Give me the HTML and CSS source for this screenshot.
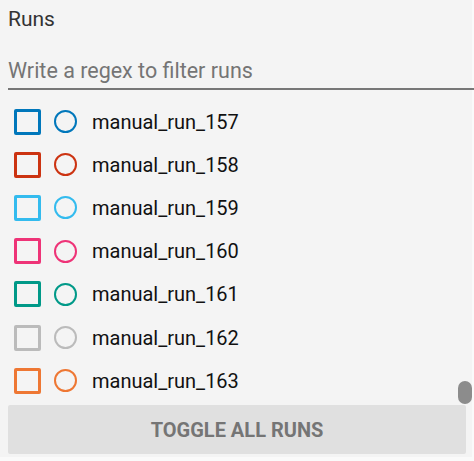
FILE: index.html
```html
<!DOCTYPE html>
<html>
<head>
<meta charset="utf-8">
<link rel="stylesheet" href="styles.css">
</head>
<body>
<div class="panel">
  <div class="title">Runs</div>
  <div class="filter"><span class="placeholder">Write a regex to filter runs</span></div>
  <div class="list">
    <div class="row c157"><span class="box"></span><span class="dot"></span><span class="name">manual_run_157</span></div>
    <div class="row c158"><span class="box"></span><span class="dot"></span><span class="name">manual_run_158</span></div>
    <div class="row c159"><span class="box"></span><span class="dot"></span><span class="name">manual_run_159</span></div>
    <div class="row c160"><span class="box"></span><span class="dot"></span><span class="name">manual_run_160</span></div>
    <div class="row c161"><span class="box"></span><span class="dot"></span><span class="name">manual_run_161</span></div>
    <div class="row c162"><span class="box"></span><span class="dot"></span><span class="name">manual_run_162</span></div>
    <div class="row c163"><span class="box"></span><span class="dot"></span><span class="name">manual_run_163</span></div>
    <div class="thumb"></div>
  </div>
  <div class="toggle">TOGGLE ALL RUNS</div>
</div>
</body>
</html>
```
FILE: styles.css
```css
html, body {
  margin: 0;
  padding: 0;
  background: #fafafa;
}
body {
  width: 474px;
  height: 461px;
  overflow: hidden;
  font-family: Roboto, "Noto Sans", sans-serif;
}
.panel {
  width: 472px;
  height: 457px;
  background: #f4f4f4;
  display: flex;
  flex-direction: column;
}
.title {
  padding: 4px 0 0 8px;
  height: 30px;
  font-size: 21px;
  line-height: 30px;
  color: #333;
}
.filter {
  margin: 24px 0 0 8px;
  width: 466px;
  height: 30px;
  border-bottom: 2px solid #777;
  display: flex;
  align-items: center;
}
.placeholder {
  font-size: 21.5px;
  color: #757575;
  line-height: 26px;
  margin-top: -4px;
}
.list {
  position: relative;
  box-sizing: border-box;
  padding: 10px 0 0 14px;
  display: flex;
  flex-direction: column;
  height: 315px;
}
.row {
  display: flex;
  align-items: center;
  height: 43.2px;
  flex: none;
}
.box {
  box-sizing: border-box;
  width: 27px;
  height: 26px;
  border: 3px solid currentColor;
  border-radius: 2px;
}
.dot {
  box-sizing: border-box;
  width: 23px;
  height: 23px;
  margin-left: 13px;
  border: 2px solid currentColor;
  border-radius: 50%;
}
.name {
  margin-left: 15px;
  font-size: 20px;
  color: #111;
}
.c157 { color: #0077bb; }
.c158 { color: #cc3311; }
.c159 { color: #33bbee; }
.c160 { color: #ee3377; }
.c161 { color: #009988; }
.c162 { color: #bbbbbb; }
.c163 { color: #ee7733; }
.thumb {
  position: absolute;
  right: 0;
  top: 291px;
  width: 14px;
  height: 23px;
  border-radius: 7px;
  background: #8c8c8c;
}
.toggle {
  margin: 0 0 0 8px;
  width: 458px;
  height: 49px;
  background: #e0e0e0;
  border-radius: 2px;
  color: #757575;
  font-size: 20px;
  font-weight: 700;
  display: flex;
  align-items: center;
  justify-content: center;
}
```
